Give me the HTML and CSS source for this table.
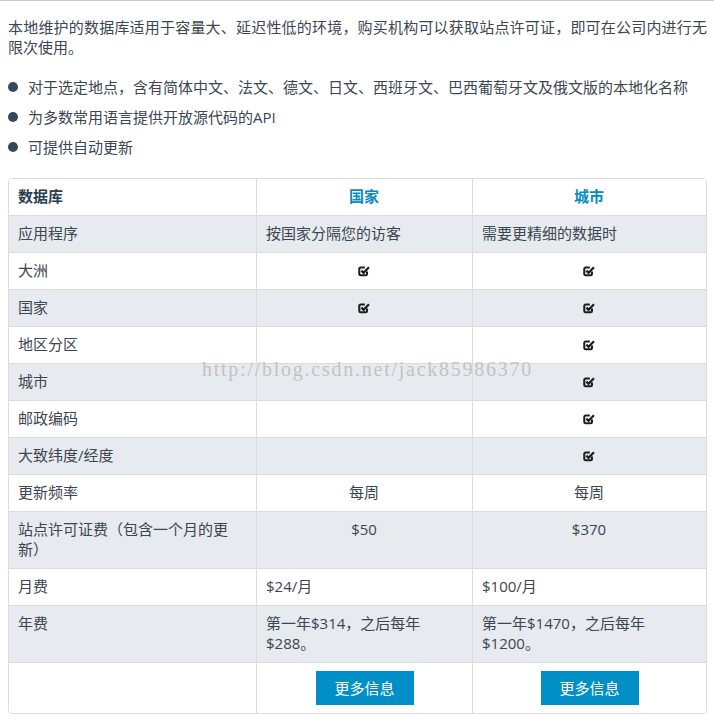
FILE: index.html
```html
<!DOCTYPE html>
<html lang="zh-CN">
<head>
<meta charset="utf-8">
<title>数据库</title>
<link rel="stylesheet" href="styles.css">
</head>
<body>
<div class="page">
  <p class="intro">本地维护的数据库适用于容量大、延迟性低的环境，购买机构可以获取站点许可证，即可在公司内进行无限次使用。</p>
  <ul class="features">
    <li>对于选定地点，含有简体中文、法文、德文、日文、西班牙文、巴西葡萄牙文及俄文版的本地化名称</li>
    <li>为多数常用语言提供开放源代码的API</li>
    <li>可提供自动更新</li>
  </ul>
  <div class="table">
    <div class="row head">
      <div class="cell label">数据库</div>
      <div class="cell center blue">国家</div>
      <div class="cell center blue">城市</div>
    </div>
    <div class="row alt">
      <div class="cell">应用程序</div>
      <div class="cell">按国家分隔您的访客</div>
      <div class="cell">需要更精细的数据时</div>
    </div>
    <div class="row">
      <div class="cell">大洲</div>
      <div class="cell center"><svg class="chk" viewBox="0 0 14 14"><path d="M10.5 7.5v3a1.5 1.5 0 0 1-1.5 1.5H3a1.5 1.5 0 0 1-1.5-1.5V4.5A1.5 1.5 0 0 1 3 3h5" fill="none" stroke="#1e1e1e" stroke-width="2.4"/><path d="M4 6.6l2.5 2.5L12.8 2.6" fill="none" stroke="#1e1e1e" stroke-width="2.6"/></svg></div>
      <div class="cell center"><svg class="chk" viewBox="0 0 14 14"><path d="M10.5 7.5v3a1.5 1.5 0 0 1-1.5 1.5H3a1.5 1.5 0 0 1-1.5-1.5V4.5A1.5 1.5 0 0 1 3 3h5" fill="none" stroke="#1e1e1e" stroke-width="2.4"/><path d="M4 6.6l2.5 2.5L12.8 2.6" fill="none" stroke="#1e1e1e" stroke-width="2.6"/></svg></div>
    </div>
    <div class="row alt">
      <div class="cell">国家</div>
      <div class="cell center"><svg class="chk" viewBox="0 0 14 14"><path d="M10.5 7.5v3a1.5 1.5 0 0 1-1.5 1.5H3a1.5 1.5 0 0 1-1.5-1.5V4.5A1.5 1.5 0 0 1 3 3h5" fill="none" stroke="#1e1e1e" stroke-width="2.4"/><path d="M4 6.6l2.5 2.5L12.8 2.6" fill="none" stroke="#1e1e1e" stroke-width="2.6"/></svg></div>
      <div class="cell center"><svg class="chk" viewBox="0 0 14 14"><path d="M10.5 7.5v3a1.5 1.5 0 0 1-1.5 1.5H3a1.5 1.5 0 0 1-1.5-1.5V4.5A1.5 1.5 0 0 1 3 3h5" fill="none" stroke="#1e1e1e" stroke-width="2.4"/><path d="M4 6.6l2.5 2.5L12.8 2.6" fill="none" stroke="#1e1e1e" stroke-width="2.6"/></svg></div>
    </div>
    <div class="row">
      <div class="cell">地区分区</div>
      <div class="cell"></div>
      <div class="cell center"><svg class="chk" viewBox="0 0 14 14"><path d="M10.5 7.5v3a1.5 1.5 0 0 1-1.5 1.5H3a1.5 1.5 0 0 1-1.5-1.5V4.5A1.5 1.5 0 0 1 3 3h5" fill="none" stroke="#1e1e1e" stroke-width="2.4"/><path d="M4 6.6l2.5 2.5L12.8 2.6" fill="none" stroke="#1e1e1e" stroke-width="2.6"/></svg></div>
    </div>
    <div class="row alt">
      <div class="cell">城市</div>
      <div class="cell"></div>
      <div class="cell center"><svg class="chk" viewBox="0 0 14 14"><path d="M10.5 7.5v3a1.5 1.5 0 0 1-1.5 1.5H3a1.5 1.5 0 0 1-1.5-1.5V4.5A1.5 1.5 0 0 1 3 3h5" fill="none" stroke="#1e1e1e" stroke-width="2.4"/><path d="M4 6.6l2.5 2.5L12.8 2.6" fill="none" stroke="#1e1e1e" stroke-width="2.6"/></svg></div>
    </div>
    <div class="row">
      <div class="cell">邮政编码</div>
      <div class="cell"></div>
      <div class="cell center"><svg class="chk" viewBox="0 0 14 14"><path d="M10.5 7.5v3a1.5 1.5 0 0 1-1.5 1.5H3a1.5 1.5 0 0 1-1.5-1.5V4.5A1.5 1.5 0 0 1 3 3h5" fill="none" stroke="#1e1e1e" stroke-width="2.4"/><path d="M4 6.6l2.5 2.5L12.8 2.6" fill="none" stroke="#1e1e1e" stroke-width="2.6"/></svg></div>
    </div>
    <div class="row alt">
      <div class="cell">大致纬度/经度</div>
      <div class="cell"></div>
      <div class="cell center"><svg class="chk" viewBox="0 0 14 14"><path d="M10.5 7.5v3a1.5 1.5 0 0 1-1.5 1.5H3a1.5 1.5 0 0 1-1.5-1.5V4.5A1.5 1.5 0 0 1 3 3h5" fill="none" stroke="#1e1e1e" stroke-width="2.4"/><path d="M4 6.6l2.5 2.5L12.8 2.6" fill="none" stroke="#1e1e1e" stroke-width="2.6"/></svg></div>
    </div>
    <div class="row">
      <div class="cell">更新频率</div>
      <div class="cell center">每周</div>
      <div class="cell center">每周</div>
    </div>
    <div class="row alt">
      <div class="cell">站点许可证费（包含一个月的更新）</div>
      <div class="cell center">$50</div>
      <div class="cell center">$370</div>
    </div>
    <div class="row">
      <div class="cell">月费</div>
      <div class="cell">$24/月</div>
      <div class="cell">$100/月</div>
    </div>
    <div class="row alt">
      <div class="cell">年费</div>
      <div class="cell">第一年$314，之后每年$288。</div>
      <div class="cell">第一年$1470，之后每年$1200。</div>
    </div>
    <div class="row">
      <div class="cell"></div>
      <div class="cell center btn-cell"><a class="btn" href="#">更多信息</a></div>
      <div class="cell center btn-cell"><a class="btn" href="#">更多信息</a></div>
    </div>
  </div>
  <div class="watermark">http://blog.csdn.net/jack85986370</div>
</div>
</body>
</html>
```

FILE: styles.css
```css
html, body {
  margin: 0;
  padding: 0;
  background: #fff;
}
body {
  border-top: 1px solid #c8c8c8;
  font-family: "Open Sans", "Noto Sans CJK SC", sans-serif;
  font-size: 15px;
  line-height: 20px;
  color: #3c4650;
}
.page {
  position: relative;
  padding: 16px 7px 5px 8px;
}
.intro {
  margin: 0;
  text-align: justify;
}
.features {
  list-style: none;
  margin: 20px 0 0;
  padding: 0;
}
.features li {
  display: flex;
  align-items: center;
  gap: 10px;
  margin-bottom: 10px;
}
.features li::before {
  content: "";
  flex: none;
  width: 10px;
  height: 10px;
  border-radius: 50%;
  background: #34495e;
}
.table {
  margin-top: 21px;
  border: 1px solid #dcdcdc;
  border-radius: 4px;
  overflow: hidden;
}
.row {
  display: grid;
  grid-template-columns: 247px 216px 1fr;
  border-top: 1px solid #dcdcdc;
  background: #fff;
}
.row.head {
  border-top: none;
}
.row.alt {
  background: #e7eaee;
}
.cell {
  padding: 7px 10px 9px 9px;
  min-height: 20px;
}
.cell.btn-cell {
  padding: 8px 10px;
}
.cell + .cell {
  border-left: 1px solid #dcdcdc;
}
.cell.center {
  text-align: center;
}
.label {
  font-weight: bold;
  color: #2c3e50;
}
.blue {
  font-weight: bold;
  color: #0a8ac0;
}
.chk {
  width: 12px;
  height: 12px;
  vertical-align: -1px;
}
.btn {
  display: inline-block;
  width: 98px;
  height: 34px;
  line-height: 34px;
  background: #008fc6;
  color: #fff;
  text-decoration: none;
  text-align: center;
}
.watermark {
  position: absolute;
  left: 202px;
  top: 358px;
  font-family: "Liberation Serif", serif;
  font-size: 20px;
  letter-spacing: 1.75px;
  color: rgba(160, 160, 160, 0.55);
  pointer-events: none;
}
```
